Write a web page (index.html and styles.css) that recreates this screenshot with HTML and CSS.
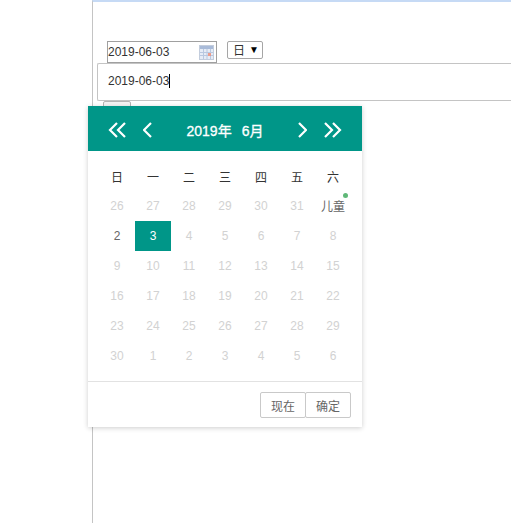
FILE: index.html
```html
<!DOCTYPE html>
<html lang="zh-CN">
<head>
    <meta charset="UTF-8">
    <meta name="viewport" content="width=device-width, initial-scale=1.0">
    <title>Date picker</title>
    <link rel="stylesheet" href="styles.css">
</head>
<body>
    <div class="frame">
        <div class="date-row">
            <div class="date-input">
                <span>2019-06-03</span>
                <svg class="date-icon" width="15" height="15" viewBox="0 0 15 15">
                    <rect x="0.5" y="0.5" width="14" height="14" fill="#e6ecf6" stroke="#c3cddd"/>
                    <rect x="1" y="1" width="13" height="3" fill="#a9bbd9"/>
                    <path d="M1 7.5h13M1 10.5h13M4.5 4v10M8 4v10M11.5 4v10" stroke="#b9c8e0" fill="none"/>
                    <rect x="9" y="8" width="3" height="3" fill="#ec9c8c"/>
                </svg>
            </div>
            <div class="mode-select">日<span class="mode-arrow">▼</span></div>
        </div>
        <div class="text-input">2019-06-03<span class="caret"></span></div>
        <div class="small-button"></div>
    </div>

    <div class="picker">
        <div class="picker-header">
            <div class="nav-group">
                <svg width="18" height="16" viewBox="0 0 18 16"><path d="M9 1 2 8l7 7M17 1l-7 7 7 7"/></svg>
                <svg width="9" height="16" viewBox="0 0 9 16"><path d="M8 1 1 8l7 7"/></svg>
            </div>
            <div class="picker-title"><span>2019年</span><span>6月</span></div>
            <div class="nav-group">
                <svg width="9" height="16" viewBox="0 0 9 16"><path d="m1 1 7 7-7 7"/></svg>
                <svg width="18" height="16" viewBox="0 0 18 16"><path d="m1 1 7 7-7 7M9 1l7 7-7 7"/></svg>
            </div>
        </div>
        <div class="picker-body">
            <div class="cal-grid">
                <div class="week">日</div><div class="week">一</div><div class="week">二</div><div class="week">三</div><div class="week">四</div><div class="week">五</div><div class="week">六</div>
                <div class="day other">26</div><div class="day other">27</div><div class="day other">28</div><div class="day other">29</div><div class="day other">30</div><div class="day other">31</div><div class="day festival"><span class="festival-text">儿童</span><i class="mark"></i></div>
                <div class="day">2</div><div class="day selected">3</div><div class="day other">4</div><div class="day other">5</div><div class="day other">6</div><div class="day other">7</div><div class="day other">8</div>
                <div class="day other">9</div><div class="day other">10</div><div class="day other">11</div><div class="day other">12</div><div class="day other">13</div><div class="day other">14</div><div class="day other">15</div>
                <div class="day other">16</div><div class="day other">17</div><div class="day other">18</div><div class="day other">19</div><div class="day other">20</div><div class="day other">21</div><div class="day other">22</div>
                <div class="day other">23</div><div class="day other">24</div><div class="day other">25</div><div class="day other">26</div><div class="day other">27</div><div class="day other">28</div><div class="day other">29</div>
                <div class="day other">30</div><div class="day other">1</div><div class="day other">2</div><div class="day other">3</div><div class="day other">4</div><div class="day other">5</div><div class="day other">6</div>
            </div>
        </div>
        <div class="picker-footer">
            <button class="foot-button">现在</button><button class="foot-button joined">确定</button>
        </div>
    </div>
</body>
</html>
```

FILE: styles.css
```css
html,
body {
    margin: 0;
    height: 100%;
    overflow: hidden;
    background-color: #ffffff;
}

body {
    font-family: "Liberation Sans", "Noto Sans CJK SC", sans-serif;
    font-size: 12px;
    color: #333333;
}

.frame {
    box-sizing: border-box;
    height: 523px;
    margin-left: 92px;
    border-left: 1px solid #c4c4c4;
    border-top: 2px solid #c6daf5;
    padding-top: 39px;
}

.date-row {
    display: flex;
    align-items: flex-start;
    margin-left: 14px;
    gap: 10px;
}

.date-input {
    box-sizing: border-box;
    width: 110px;
    height: 22px;
    border: 1px solid #a0a0a0;
    display: flex;
    align-items: center;
    justify-content: space-between;
    padding-right: 2px;
}

.date-icon {
    display: block;
}

.mode-select {
    box-sizing: border-box;
    width: 36px;
    height: 18px;
    border: 1px solid #a6a6a6;
    border-radius: 2px;
    line-height: 16px;
    padding-left: 5px;
    white-space: nowrap;
}

.mode-arrow {
    font-size: 10px;
    margin-left: 4px;
    vertical-align: 2px;
    color: #000000;
}

.text-input {
    box-sizing: border-box;
    height: 38px;
    margin-left: 4px;
    border: 1px solid #c4c4c4;
    border-right: none;
    border-radius: 2px 0 0 2px;
    line-height: 35px;
    padding-left: 10px;
}

.caret {
    display: inline-block;
    width: 1px;
    height: 14px;
    background-color: #000000;
    vertical-align: -3px;
}

.small-button {
    box-sizing: border-box;
    width: 28px;
    height: 20px;
    margin-left: 10px;
    border: 1px solid #b4b4b4;
    border-radius: 2px;
    background-color: #f4f4f4;
}

.picker {
    position: absolute;
    top: 106px;
    left: 88px;
    box-sizing: border-box;
    width: 274px;
    height: 321px;
    background-color: #ffffff;
    box-shadow: 0 1px 5px rgba(0, 0, 0, 0.2);
}

.picker-header {
    box-sizing: border-box;
    height: 45px;
    background-color: #009688;
    color: #ffffff;
    display: flex;
    align-items: center;
    justify-content: space-between;
    padding: 3px 20px 0;
}

.picker-title {
    font-size: 14px;
    display: flex;
    gap: 10px;
    -webkit-text-stroke: 0.3px #ffffff;
}

.nav-group {
    display: flex;
    align-items: center;
    gap: 17px;
}

.nav-group svg {
    display: block;
}

.nav-group path {
    fill: none;
    stroke: #ffffff;
    stroke-width: 2.2;
}

.picker-body {
    padding: 10px 11px;
    border-bottom: 1px solid #e2e2e2;
}

.cal-grid {
    display: grid;
    grid-template-columns: repeat(7, 36px);
    grid-auto-rows: 30px;
}

.week,
.day {
    display: flex;
    align-items: center;
    justify-content: center;
    position: relative;
}

.day {
    color: #666666;
}

.day.other {
    color: #d2d2d2;
}

.festival-text {
    margin-top: -2px;
}

.day.selected {
    background-color: #009688;
    color: #ffffff;
}

.mark {
    position: absolute;
    top: 2px;
    right: 3px;
    width: 5px;
    height: 5px;
    border-radius: 50%;
    background-color: #5fb878;
}

.picker-footer {
    display: flex;
    justify-content: flex-end;
    padding: 10px 11px;
}

.foot-button {
    box-sizing: border-box;
    width: 46px;
    height: 26px;
    padding: 0;
    font-family: inherit;
    font-size: 12px;
    color: #666666;
    background-color: #ffffff;
    border: 1px solid #c9c9c9;
    border-radius: 2px;
}

.foot-button.joined {
    margin-left: -1px;
}
```
